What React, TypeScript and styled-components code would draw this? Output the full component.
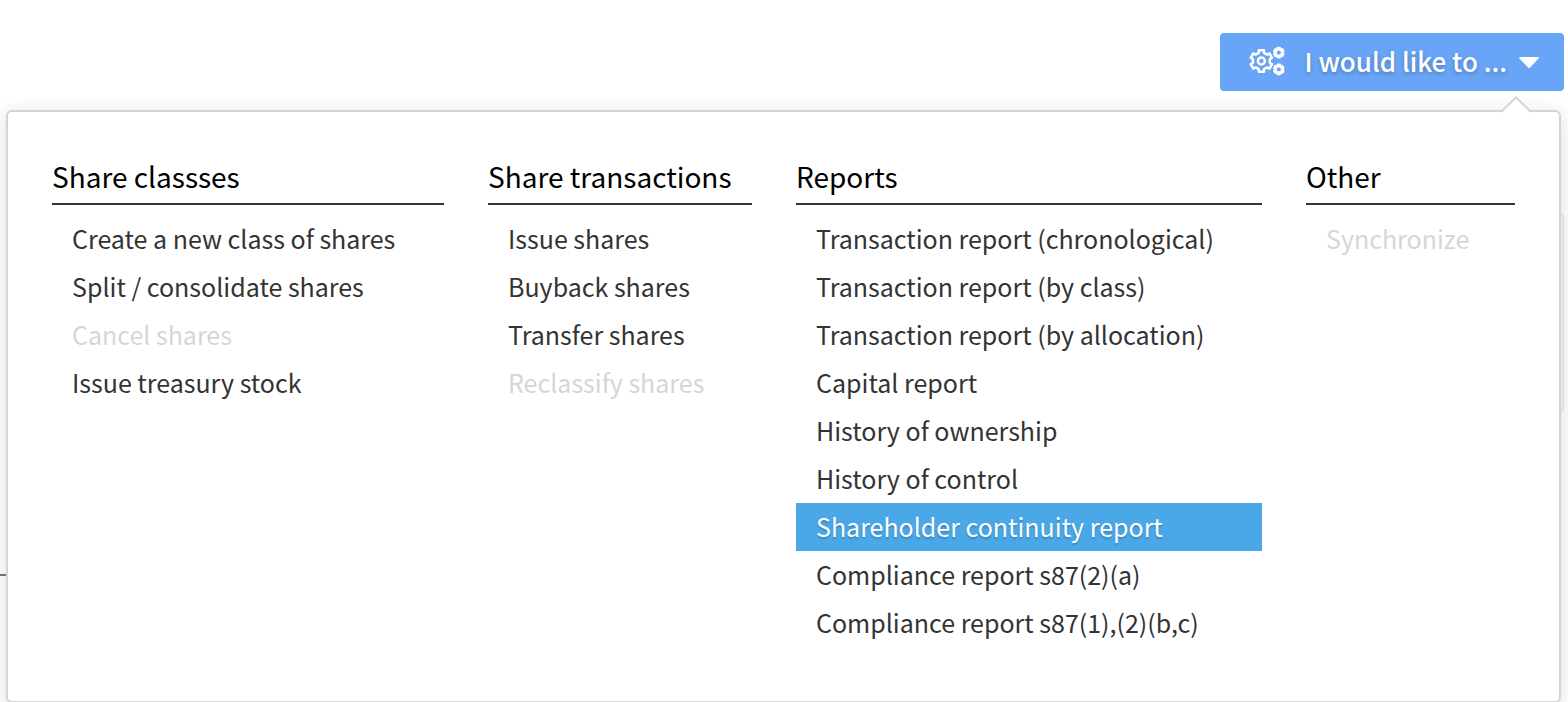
import React from "react";
import styled, { createGlobalStyle, css } from "styled-components";

const Global = createGlobalStyle`
  *, *::before, *::after { box-sizing: border-box; }
  body {
    margin: 0;
    background: #fff;
    color: #333;
    font-family: "Noto Sans CJK SC", "Noto Sans", sans-serif;
    overflow: hidden;
  }
`;

const Page = styled.div`
  position: relative;
  padding: 33px 4px 0 6px;
`;

const Toolbar = styled.header`
  display: flex;
  justify-content: flex-end;
`;

const MenuButton = styled.button`
  display: flex;
  align-items: center;
  height: 58px;
  padding: 0 25px 2px 29px;
  border: 0;
  border-radius: 4px;
  background: #69a5f6;
  color: #fff;
  font: 500 26px/56px "Noto Sans CJK SC", "Noto Sans", sans-serif;
  text-shadow: 0 2px 4px rgba(0, 0, 0, 0.25);
  cursor: pointer;
`;

const GearsIcon = styled.svg`
  width: 36px;
  height: 30px;
  margin-right: 20px;
  fill: none;
  stroke: #fff;
`;

const Caret = styled.svg`
  width: 20px;
  height: 12px;
  margin: 4px 0 0 12px;
  fill: #fff;
`;

const Panel = styled.nav`
  position: relative;
  display: grid;
  grid-template-columns: 392fr 264fr 466fr 209fr;
  gap: 44px;
  margin: 19px 3px 0 0;
  padding: 44px 44px 54px;
  border: 2px solid #d4d4d5;
  border-radius: 6px;
  background: #fff;
  box-shadow: 0 4px 20px rgba(34, 36, 38, 0.15);
`;

const Pointer = styled.svg`
  position: absolute;
  top: -16px;
  right: 27px;
  width: 32px;
  height: 18px;
`;

const Heading = styled.h2`
  margin: 0 0 10px;
  padding-bottom: 6px;
  border-bottom: 2px solid #333;
  color: #000;
  font-size: 28px;
  font-weight: 400;
  line-height: 41px;
`;

const List = styled.ul`
  margin: 0;
  padding: 0;
  list-style: none;
`;

const Item = styled.button<{ $active?: boolean }>`
  display: block;
  width: 100%;
  height: 48px;
  padding: 0 20px 2px;
  border: 0;
  background: none;
  color: #333;
  font: 400 25px/46px "Noto Sans CJK SC", "Noto Sans", sans-serif;
  text-align: left;
  white-space: nowrap;
  cursor: pointer;

  &:disabled {
    color: #d6d6d6;
    cursor: default;
  }

  ${(p) =>
    p.$active &&
    css`
      background: #4ba8e8;
      color: #fff;
      text-shadow: 0 2px 2px rgba(0, 0, 0, 0.2);
    `}
`;

/* Edges of the page content that the open menu covers. */
const PageRule = styled.div`
  position: absolute;
  top: 574px;
  left: 0;
  width: 8px;
  height: 2px;
  background: #777;
`;

const PageCard = styled.div`
  position: absolute;
  top: 213px;
  right: 4px;
  width: 20px;
  height: 199px;
  border: 2px solid #ececec;
  border-radius: 4px;
`;

const gearPath = (cx: number, cy: number, outer: number, inner: number) => {
  const step = Math.PI / 3;
  const points: string[] = [];
  for (let i = 0; i < 6; i++) {
    const a = i * step - Math.PI / 2;
    [
      [-0.3, inner],
      [-0.22, outer],
      [0.22, outer],
      [0.3, inner],
    ].forEach(([offset, r]) => {
      const t = a + offset * step;
      points.push(`${(cx + r * Math.cos(t)).toFixed(2)} ${(cy + r * Math.sin(t)).toFixed(2)}`);
    });
  }
  return `M${points.join("L")}Z`;
};

const Gears = () => (
  <GearsIcon viewBox="0 0 36 30" aria-hidden="true">
    <g strokeWidth="2.5" strokeLinejoin="round">
      <path d={gearPath(12.4, 15, 11.1, 8.6)} />
      <circle cx="12.4" cy="15" r="3.5" />
      <path d={gearPath(29.8, 6.6, 4.7, 3.2)} />
      <path d={gearPath(29.8, 23.4, 4.7, 3.2)} />
    </g>
  </GearsIcon>
);

type Entry = { label: string; disabled?: boolean; active?: boolean };

const groups: { title: string; entries: Entry[] }[] = [
  {
    title: "Share classses",
    entries: [
      { label: "Create a new class of shares" },
      { label: "Split / consolidate shares" },
      { label: "Cancel shares", disabled: true },
      { label: "Issue treasury stock" },
    ],
  },
  {
    title: "Share transactions",
    entries: [
      { label: "Issue shares" },
      { label: "Buyback shares" },
      { label: "Transfer shares" },
      { label: "Reclassify shares", disabled: true },
    ],
  },
  {
    title: "Reports",
    entries: [
      { label: "Transaction report (chronological)" },
      { label: "Transaction report (by class)" },
      { label: "Transaction report (by allocation)" },
      { label: "Capital report" },
      { label: "History of ownership" },
      { label: "History of control" },
      { label: "Shareholder continuity report", active: true },
      { label: "Compliance report s87(2)(a)" },
      { label: "Compliance report s87(1),(2)(b,c)" },
    ],
  },
  { title: "Other", entries: [{ label: "Synchronize", disabled: true }] },
];

export default function App() {
  return (
    <Page>
      <Global />
      <PageRule />
      <PageCard />
      <Toolbar>
        <MenuButton type="button" aria-expanded="true">
          <Gears />
          I would like to ...
          <Caret viewBox="0 0 20 12" aria-hidden="true">
            <path d="M1.2 0H18.8Q20.4 .4 19.4 1.8L11 10.4Q10 11.4 9 10.4L.6 1.8Q-.4 .4 1.2 0Z" />
          </Caret>
        </MenuButton>
      </Toolbar>
      <Panel aria-label="I would like to">
        <Pointer viewBox="0 0 32 18" aria-hidden="true">
          <path d="M0 18L16 2L32 18Z" fill="#fff" />
          <path d="M1 16L16 1.5L31 16" fill="none" stroke="#d4d4d5" strokeWidth="2" />
        </Pointer>
        {groups.map((group) => (
          <section key={group.title}>
            <Heading>{group.title}</Heading>
            <List>
              {group.entries.map((entry) => (
                <li key={entry.label}>
                  <Item type="button" disabled={entry.disabled} $active={entry.active}>
                    {entry.label}
                  </Item>
                </li>
              ))}
            </List>
          </section>
        ))}
      </Panel>
    </Page>
  );
}
